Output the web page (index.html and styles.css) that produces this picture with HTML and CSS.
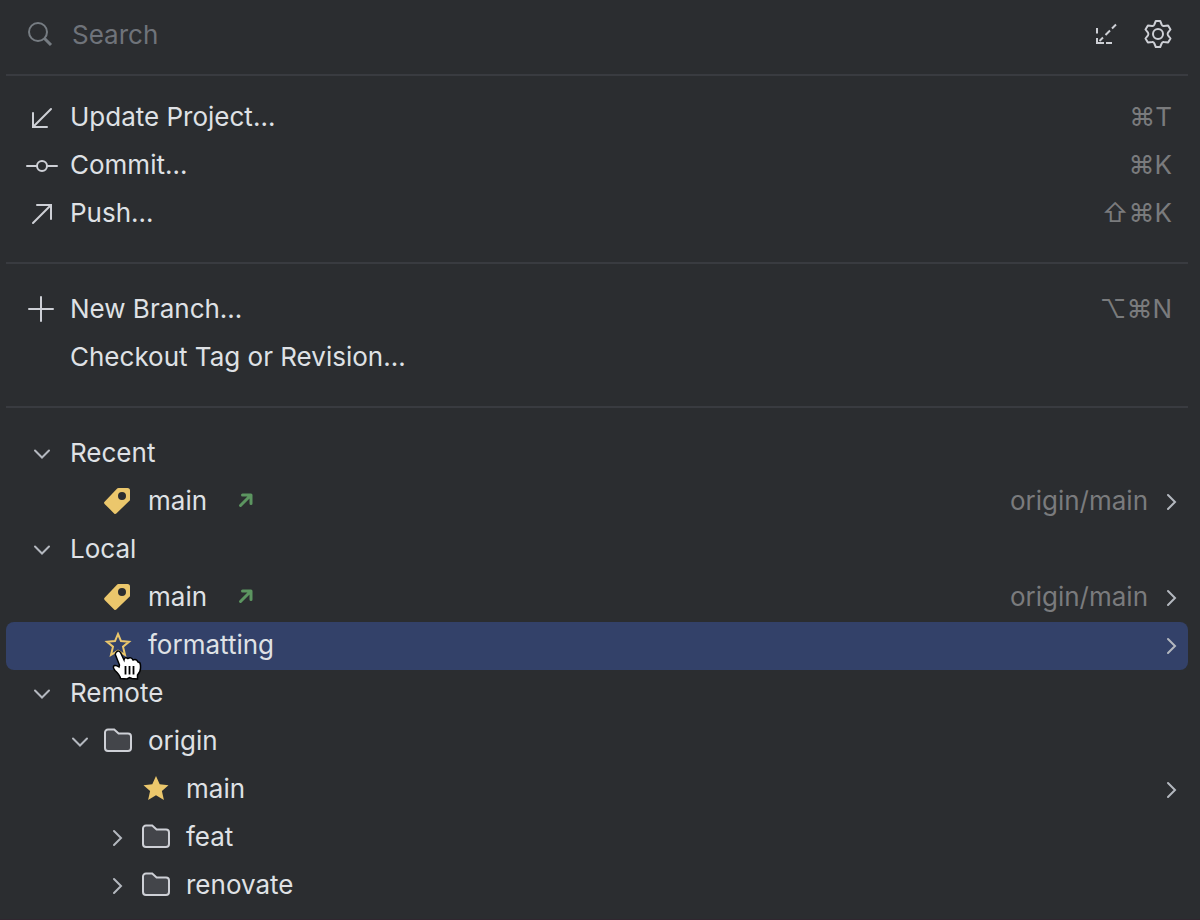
FILE: index.html
```html
<!DOCTYPE html>
<html lang="en">
<head>
<meta charset="utf-8">
<title>Branches</title>
<link rel="stylesheet" href="styles.css">
</head>
<body>
<svg class="sprite" aria-hidden="true">
  <symbol id="down" viewBox="0 0 32 32"><path d="M9 12.500 16 19.500 23 12.500" fill="none" stroke="#b4b8bf" stroke-width="2" stroke-linecap="round"/></symbol>
  <symbol id="right" viewBox="0 0 32 32"><path d="M12 9 19 16 12 23" fill="none" stroke="#b4b8bf" stroke-width="2" stroke-linecap="round"/></symbol>
  <symbol id="tag" viewBox="0 0 32 32"><path fill="#ebc76c" fill-rule="evenodd" d="M16.500 2H25.500Q28 2 28 4.500V14.300L14.300 27.500Q13.200 28.500 12.100 27.400L2.600 17.900Q1.500 16.800 2.600 15.700L14.700 3Q15.500 2 16.500 2ZM20 6a4 4 0 1 0 0 8 4 4 0 0 0 0-8Z"/></symbol>
  <symbol id="folder" viewBox="0 0 32 32"><path d="M3 6.500a3 3 0 0 1 3-3H12.200L16.600 7.500H26a3 3 0 0 1 3 3V22a3 3 0 0 1-3 3H6a3 3 0 0 1-3-3Z" fill="#43454a" stroke="#ced0d6" stroke-width="2"/></symbol>
  <symbol id="outgoing" viewBox="0 0 20 20"><path d="M5.500 3H14V11.500M13.500 3.500 3.500 13.500" fill="none" stroke="#5c9560" stroke-width="3" stroke-linecap="round" stroke-linejoin="round"/></symbol>
</svg>
<main class="popup">
  <header class="toolbar">
    <svg class="icon" viewBox="0 0 32 32" fill="none" stroke="#767c82" stroke-width="2"><circle cx="10" cy="14" r="9"/><path d="m16.500 20.500 6.500 6.500" stroke-width="3"/></svg>
    <input class="search" type="text" placeholder="Search" aria-label="Search">
    <button class="tool" type="button" aria-label="Fetch"><svg class="icon" viewBox="0 0 32 32" fill="none" stroke="#ced0d6" stroke-width="2"><path d="M7 10v5.500M7 20v5H14M16 25h6M9.500 23 13 19.500M15.500 17 20 12.500M22 10.500 26 6.500"/></svg></button>
    <button class="tool" type="button" aria-label="Settings"><svg class="icon" viewBox="0 0 32 32" fill="none" stroke="#ced0d6" stroke-width="2" stroke-linejoin="round"><circle cx="16" cy="16" r="5"/><path d="M13.800 3H18.200L19.800 6.900Q20.400 8.100 21.900 7.900L26.100 7.600 28.500 11.500 26 14.700Q25.200 16 26 17.300L28.500 20.500 26.100 24.400 21.900 24.100Q20.400 23.900 19.800 25.100L18.200 29H13.800L12.200 25.100Q11.600 23.900 10.100 24.100L5.900 24.400 3.500 20.500 6 17.300Q6.800 16 6 14.700L3.500 11.500 5.900 7.600 10.100 7.900Q11.600 8.100 12.200 6.900Z"/></svg></button>
  </header>
  <section class="group actions">
    <button class="row" type="button"><svg class="icon" viewBox="0 0 32 32" fill="none" stroke="#ced0d6" stroke-width="2" stroke-linecap="round"><path d="M7 11v14h14M7 25 25 7"/></svg><span class="label">Update Project…</span><kbd class="keys">⌘T</kbd></button>
    <button class="row" type="button"><svg class="icon" viewBox="0 0 32 32" fill="none" stroke="#ced0d6" stroke-width="2" stroke-linecap="round"><circle cx="16" cy="16" r="5"/><path d="M1 16h10M21 16h10"/></svg><span class="label">Commit…</span><kbd class="keys">⌘K</kbd></button>
    <button class="row" type="button"><svg class="icon" viewBox="0 0 32 32" fill="none" stroke="#ced0d6" stroke-width="2" stroke-linecap="round"><path d="M11 7h14v14M25 7 7 25"/></svg><span class="label">Push…</span><kbd class="keys">⇧⌘K</kbd></button>
  </section>
  <section class="group">
    <button class="row" type="button"><svg class="icon" viewBox="0 0 32 32" fill="none" stroke="#ced0d6" stroke-width="2" stroke-linecap="round"><path d="M15 3v24M3 15h24"/></svg><span class="label">New Branch…</span><kbd class="keys">⌥⌘N</kbd></button>
    <button class="row" type="button"><span class="icon"></span><span class="label">Checkout Tag or Revision…</span></button>
  </section>
  <section class="group">
    <button class="row" type="button"><svg class="icon"><use href="#down"/></svg><span class="label">Recent</span></button>
    <button class="row level-2" type="button"><svg class="icon"><use href="#tag"/></svg><span class="label">main</span><svg class="badge"><use href="#outgoing"/></svg><span class="remote">origin/main</span><svg class="icon more"><use href="#right"/></svg></button>
    <button class="row" type="button"><svg class="icon"><use href="#down"/></svg><span class="label">Local</span></button>
    <button class="row level-2" type="button"><svg class="icon"><use href="#tag"/></svg><span class="label">main</span><svg class="badge"><use href="#outgoing"/></svg><span class="remote">origin/main</span><svg class="icon more"><use href="#right"/></svg></button>
    <button class="row level-2 selected" type="button"><span class="star-holder"><svg class="icon" viewBox="0 0 32 32"><path d="M16 4 19 11.100 27 11.700 21 16.700 23 25 16 20.700 9 25 11 16.700 5 11.700 13 11.100Z" fill="none" stroke="#ebc76c" stroke-width="2"/></svg><svg class="pointer" viewBox="0 0 32 34"><path d="M4.500 4Q6.500 2 8.500 4.500L12 12Q12.500 8.500 16 10.500 19 8.500 21 12 24.500 10.500 26 14Q28.500 14 28.500 17.500V20Q28.500 24 25.500 27V31L20 30.500 17.500 29.500 15 31 8.500 30.500Q8 27 3 22.500 0 18.500 2.500 17.500 4.500 17 7 19L7.500 17 3.500 7Q3 5 4.500 4Z" fill="#fff" stroke="#000" stroke-width="1.500"/><path d="M13.500 18v8.500M17.500 18v8.500M21.500 18v8.500" stroke="#000" stroke-width="1.800" fill="none"/></svg></span><span class="label">formatting</span><svg class="icon more"><use href="#right"/></svg></button>
    <button class="row" type="button"><svg class="icon"><use href="#down"/></svg><span class="label">Remote</span></button>
    <button class="row level-1" type="button"><svg class="icon"><use href="#down"/></svg><svg class="icon"><use href="#folder"/></svg><span class="label">origin</span></button>
    <button class="row level-3" type="button"><svg class="icon" viewBox="0 0 32 32"><path d="M16 2 19.700 10.300 28.500 11.200 21.900 17.100 23.900 26 16 21.300 8.100 26 10.100 17.100 3.500 11.200 12.300 10.300Z" fill="#ebc76c"/></svg><span class="label">main</span><svg class="icon more"><use href="#right"/></svg></button>
    <button class="row level-2" type="button"><svg class="icon"><use href="#right"/></svg><svg class="icon"><use href="#folder"/></svg><span class="label">feat</span></button>
    <button class="row level-2" type="button"><svg class="icon"><use href="#right"/></svg><svg class="icon"><use href="#folder"/></svg><span class="label">renovate</span></button>
  </section>
</main>
</body>
</html>
```
FILE: styles.css
```css
* { box-sizing: border-box; }
body {
  margin: 0;
  background: #2b2d30;
  color: #dfe1e5;
  font: 26px/32px Inter, "Noto Sans", sans-serif;
  font-optical-sizing: none;
}
button, input, kbd { font: inherit; color: inherit; }
button { border: 0; background: none; text-align: left; }
.sprite { position: absolute; width: 0; height: 0; }
.popup {
  min-height: 100vh;
  padding: 0 12px 0 6px;
  border-bottom: 1px solid #30262f;
}
.toolbar {
  display: flex;
  align-items: center;
  gap: 12px;
  height: 76px;
  padding: 0 14px 6px 22px;
  border-bottom: 2px solid #393b40;
}
.icon { flex: none; display: block; width: 32px; height: 32px; }
.search {
  flex: 1;
  min-width: 0;
  padding: 2px 0 0;
  border: 0;
  outline: 0;
  background: none;
}
.search::placeholder { color: #6f737a; opacity: 1; }
.tool { padding: 0; margin-left: 8px; }
.group { padding: 22px 0 24px; }
.group + .group { border-top: 2px solid #393b40; }
.group:last-child { padding-bottom: 8px; }
.actions { padding-top: 18px; }
.row {
  display: flex;
  align-items: center;
  width: 100%;
  height: 48px;
  padding: 0 16px 0 20px;
  border-radius: 8px;
}
.label { margin: 0 12px; padding-bottom: 2px; white-space: nowrap; }
.level-1 { padding-left: 58px; }
.level-2 { padding-left: 96px; }
.level-3 { padding-left: 134px; }
.level-1 .label, .level-2 .label, .level-3 .label { margin-left: 14px; }
.level-1 .icon + .icon, .level-2 .icon + .icon { margin-left: 6px; }
.keys, .remote { margin-left: auto; padding-bottom: 2px; color: #7a7b7d; }
.badge { width: 20px; height: 20px; margin-left: 18px; }
.more { margin-left: auto; margin-right: -16px; }
.remote + .more { margin-left: 8px; }
.selected { background: #334169; }
.star-holder { position: relative; }
.pointer { position: absolute; left: 10px; top: 18px; width: 32px; height: 34px; }
```
